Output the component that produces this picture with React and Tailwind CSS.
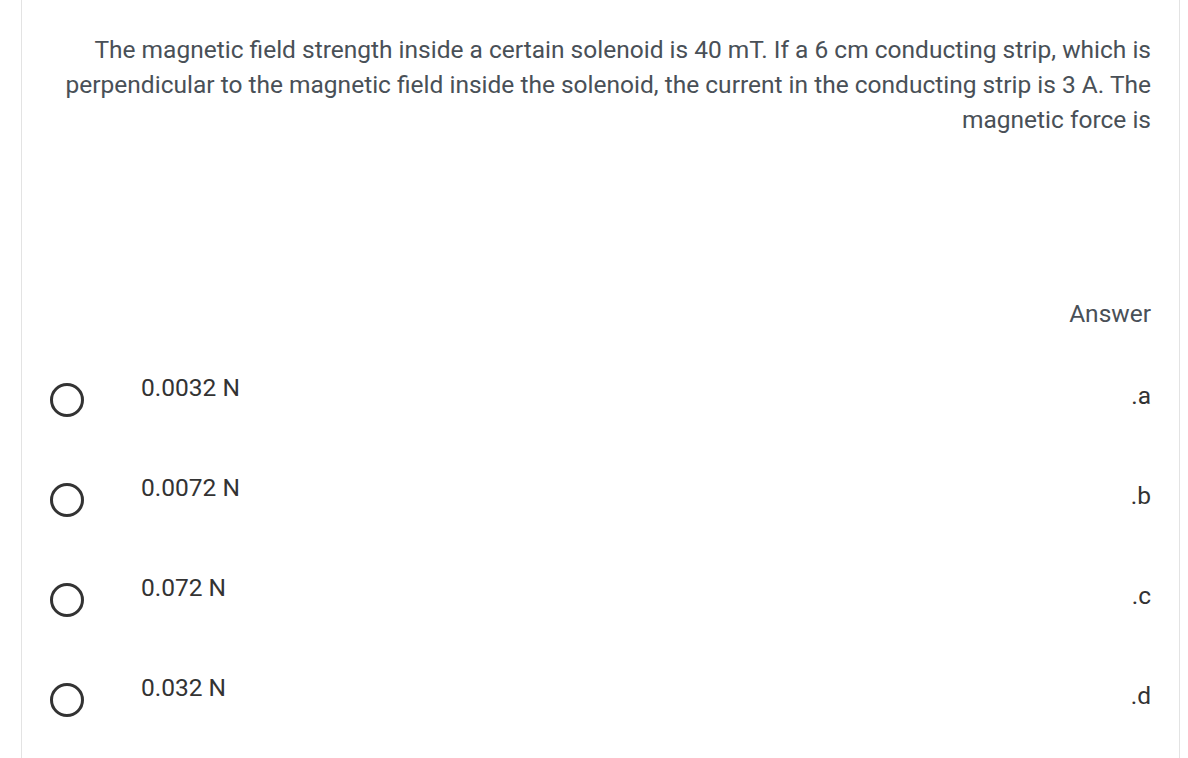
export default function App() {
  const options = [
    { text: "0.0032 N", label: ".a" },
    { text: "0.0072 N", label: ".b" },
    { text: "0.072 N", label: ".c" },
    { text: "0.032 N", label: ".d" },
  ];
  return (
    <div className="w-[1188px] h-[758px] overflow-hidden bg-white" style={{ fontFamily: "Roboto, 'Liberation Sans', sans-serif" }}>
      <div className="ml-[21px] w-[1159px] h-[758px] border-l border-r border-[#e3e3e3] pl-[36px] pr-[28px] pt-[32px]">
        <p className="text-right text-[24.5px] leading-[35px] text-[#495057]">
          The magnetic field strength inside a certain solenoid is 40 mT. If a 6 cm conducting strip, which is perpendicular to the magnetic field inside the solenoid, the current in the conducting strip is 3 A. The magnetic force is
        </p>
        <div className="mt-[159px] text-right text-[24.5px] leading-[35px] text-[#495057]">Answer</div>
        <div className="mt-[39px] -ml-[8px]">
          {options.map((o) => (
            <div key={o.label} className="flex h-[100px] items-start justify-between text-[24.5px] leading-[35px] text-[#333]">
              <div className="flex items-start">
                <div className="mt-[13px] h-[34px] w-[34px] rounded-full border-[3px] border-[#333]" />
                <div className="ml-[57px]">{o.text}</div>
              </div>
              <div className="mt-[8px]">{o.label}</div>
            </div>
          ))}
        </div>
      </div>
    </div>
  );
}
